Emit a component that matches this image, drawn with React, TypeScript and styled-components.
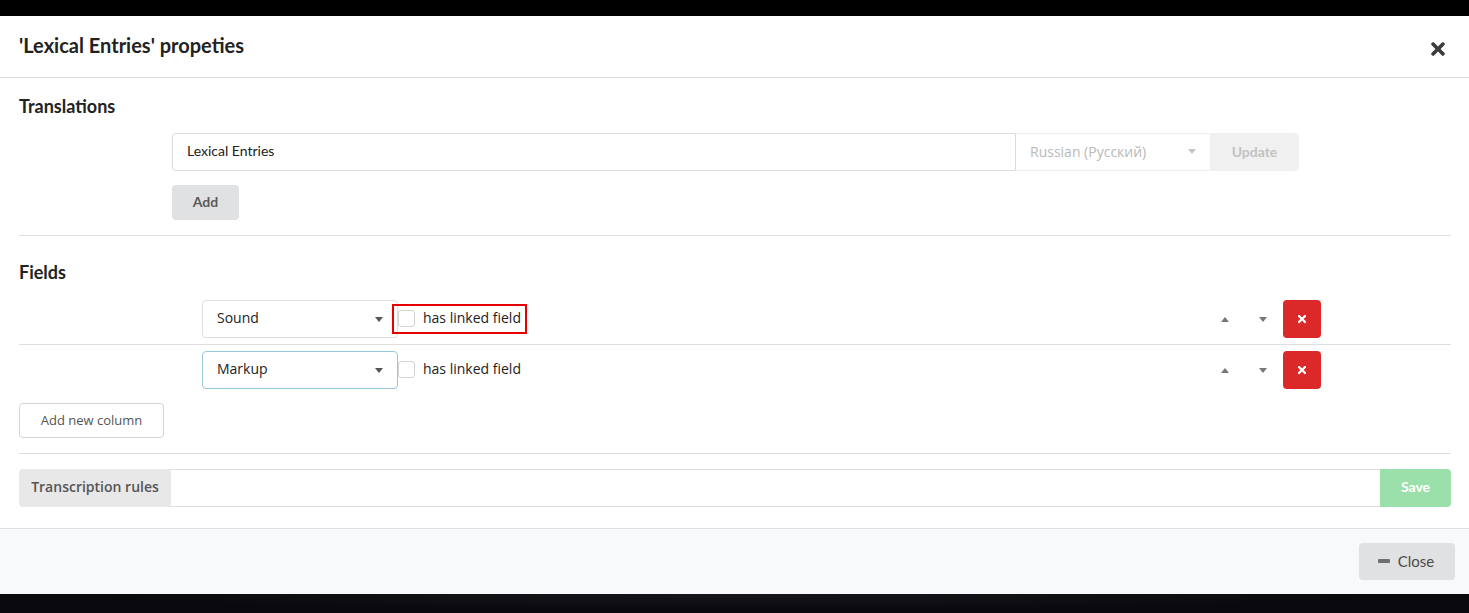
import React from "react";
import styled, { createGlobalStyle } from "styled-components";
import { FaTimes } from "react-icons/fa";

const Global = createGlobalStyle`
  html, body { margin: 0; padding: 0; background: #000; }
  * { box-sizing: border-box; }
  body { font-family: Lato, "Open Sans", sans-serif; }
`;

const Page = styled.div`
  display: flex;
  flex-direction: column;
  width: 1469px;
  height: 613px;
  overflow: hidden;
  background: #000;
`;

const TopStrip = styled.div`
  height: 16px;
  background: #000;
  flex: none;
`;

const BottomStrip = styled.div`
  flex: 1;
  background:
    radial-gradient(ellipse at 50% 0%, #15151b 0%, #0a0a0e 60%),
    #0a0a0e;
`;

const Modal = styled.div`
  background: #fff;
  display: flex;
  flex-direction: column;
  flex: none;
`;

const Header = styled.div`
  height: 62px;
  border-bottom: 1px solid #dedede;
  display: flex;
  align-items: center;
  justify-content: space-between;
  padding: 0 22px 0 19px;
`;

const Title = styled.h1`
  margin: 0;
  font-family: Lato, sans-serif;
  font-weight: 700;
  font-size: 20px;
  color: #222;
  position: relative;
  top: -2px;
`;

const CloseX = styled.span`
  display: flex;
  color: #3c3c3c;
  font-size: 20px;
  margin-top: 4px;
  margin-right: -1px;
`;

const Content = styled.div`
  padding: 17px 18px 21px 19px;
`;

const SectionTitle = styled.h3`
  margin: 0;
  font-family: Lato, sans-serif;
  font-weight: 700;
  font-size: 18px;
  line-height: 23px;
  color: #222;
`;

const Indent = styled.div<{ $left: number }>`
  padding-left: ${(p) => p.$left}px;
`;

const InputRow = styled.div`
  display: flex;
  width: 1127px;
  height: 38px;
  margin-top: 15px;
`;

const TextInput = styled.div`
  flex: 1;
  border: 1px solid #dcdcdc;
  border-radius: 4px 0 0 4px;
  display: flex;
  align-items: center;
  padding: 0 0 3px 14px;
  font-family: Lato, sans-serif;
  font-size: 14px;
  color: #222;
`;

const LangSelect = styled.div`
  width: 194px;
  border-top: 1px solid #eee;
  border-bottom: 1px solid #eee;
  display: flex;
  align-items: center;
  justify-content: space-between;
  padding: 0 14px 2px 14px;
  font-family: "Open Sans", sans-serif;
  font-size: 14px;
  color: #b9b9b9;
`;

const Caret = styled.span<{ $up?: boolean; $color?: string }>`
  width: 0;
  height: 0;
  border-left: 4.5px solid transparent;
  border-right: 4.5px solid transparent;
  ${(p) =>
    p.$up
      ? `border-bottom: 5px solid ${p.$color || "#666"};`
      : `border-top: 5px solid ${p.$color || "#666"};`}
`;

const Button = styled.button<{ $bg: string; $color: string; $w: number; $h: number }>`
  width: ${(p) => p.$w}px;
  height: ${(p) => p.$h}px;
  background: ${(p) => p.$bg};
  color: ${(p) => p.$color};
  border: none;
  border-radius: 4px;
  font-family: Lato, sans-serif;
  font-weight: 700;
  font-size: 14px;
  display: flex;
  align-items: center;
  justify-content: center;
  gap: 8px;
  padding: 0 0 2px;
  cursor: pointer;
  flex: none;
`;

const UpdateButton = styled(Button)`
  border-radius: 0 4px 4px 0;
`;

const AddWrap = styled.div`
  margin-top: 14px;
`;

const Divider = styled.div<{ $top: number }>`
  height: 1px;
  background: #dedede;
  margin-top: ${(p) => p.$top}px;
`;

const FieldsTitle = styled(SectionTitle)`
  margin-top: 25px;
`;

const FieldList = styled.div`
  margin-top: 10px;
`;

const FieldRow = styled.div`
  display: flex;
  align-items: center;
  padding: 6px 0 6px 183px;
  & + & {
    border-top: 1px solid #dedede;
  }
`;

const Select = styled.div<{ $focus?: boolean }>`
  width: 196px;
  height: 38px;
  border: 1px solid ${(p) => (p.$focus ? "#96c8da" : "#dedede")};
  border-radius: 4px;
  display: flex;
  align-items: center;
  justify-content: space-between;
  padding: 0 14px 0 14px;
  font-family: "Open Sans", sans-serif;
  font-size: 14px;
  color: #222;
`;

const SelectText = styled.span`
  margin-bottom: 3px;
`;

const LinkedLabel = styled.label<{ $highlight?: boolean }>`
  position: relative;
  display: flex;
  align-items: center;
  gap: 8px;
  margin-left: 0px;
  line-height: 17px;
  font-family: "Open Sans", sans-serif;
  font-size: 14px;
  color: #222;
  &::after {
    content: "";
    display: ${(p) => (p.$highlight ? "block" : "none")};
    position: absolute;
    left: -6px;
    right: -6px;
    top: -5px;
    bottom: -5px;
    border: 2px solid #e60000;
  }
`;

const LabelText = styled.span`
  margin-bottom: 3px;
`;

const Box = styled.span`
  width: 17px;
  height: 17px;
  border: 1px solid #d4d4d5;
  border-radius: 3px;
  background: #fff;
  margin-bottom: 1px;
`;

const Spacer = styled.div`
  flex: 1;
`;

const ArrowButton = styled.button`
  width: 38px;
  height: 38px;
  background: #fff;
  border: none;
  display: flex;
  align-items: center;
  justify-content: center;
  padding: 0;
`;

const RowActions = styled.div`
  display: flex;
  align-items: center;
  margin-right: 130px;
`;

const DeleteButton = styled(Button)`
  margin-left: 1px;
  padding: 0;
`;

const AddColumnButton = styled.button`
  margin-top: 8px;
  width: 145px;
  height: 35px;
  background: #fff;
  border: 1px solid #d4d4d5;
  border-radius: 4px;
  font-family: "Open Sans", sans-serif;
  font-size: 13px;
  color: #555;
  padding: 0 0 2px;
`;

const RulesRow = styled.div`
  display: flex;
  height: 38px;
  margin-top: 15px;
`;

const RulesLabel = styled.div`
  width: 152px;
  background: #e8e8e8;
  border-radius: 4px 0 0 4px;
  display: flex;
  align-items: center;
  justify-content: center;
  padding-bottom: 3px;
  font-family: "Open Sans", sans-serif;
  font-weight: 600;
  font-size: 14px;
  color: #555;
`;

const RulesInput = styled.div`
  flex: 1;
  border-top: 1px solid #dedede;
  border-bottom: 1px solid #dedede;
`;

const SaveButton = styled(Button)`
  border-radius: 0 4px 4px 0;
  padding-bottom: 3px;
`;

const Footer = styled.div`
  height: 66px;
  border-top: 1px solid #dedede;
  background: #f8f9fa;
  display: flex;
  align-items: center;
  justify-content: flex-end;
  padding: 0 14px 0 0;
`;

const CloseButton = styled(Button)`
  font-weight: 400;
  font-size: 15px;
  color: #4a4a4a;
  gap: 8px;
  padding: 0 2px 0 0;
  margin-top: -1px;
`;

const MinusBar = styled.span`
  width: 12px;
  height: 4px;
  border-radius: 1px;
  background: #707070;
`;

const fields = [
  { name: "Sound", highlight: true, focus: false },
  { name: "Markup", highlight: false, focus: true },
];

export default function App() {
  return (
    <>
      <Global />
      <Page>
        <TopStrip />
        <Modal>
          <Header>
            <Title>'Lexical Entries' propeties</Title>
            <CloseX>
              <FaTimes />
            </CloseX>
          </Header>
          <Content>
            <SectionTitle>Translations</SectionTitle>
            <Indent $left={153}>
              <InputRow>
                <TextInput>Lexical Entries</TextInput>
                <LangSelect>
                  <span>Russian (Русский)</span>
                  <Caret $color="#c4c4c4" />
                </LangSelect>
                <UpdateButton $bg="#f0f0f1" $color="#c2c2c2" $w={89} $h={38}>
                  Update
                </UpdateButton>
              </InputRow>
              <AddWrap>
                <Button $bg="#e0e1e2" $color="#5a5a5a" $w={67} $h={35}>
                  Add
                </Button>
              </AddWrap>
            </Indent>
            <Divider $top={15} />
            <FieldsTitle>Fields</FieldsTitle>
            <FieldList>
              {fields.map((f) => (
                <FieldRow key={f.name}>
                  <Select $focus={f.focus}>
                    <SelectText>{f.name}</SelectText>
                    <Caret $color="#555" />
                  </Select>
                  <LinkedLabel $highlight={f.highlight}>
                    <Box />
                    <LabelText>has linked field</LabelText>
                  </LinkedLabel>
                  <Spacer />
                  <RowActions>
                    <ArrowButton>
                      <Caret $up $color="#777" />
                    </ArrowButton>
                    <ArrowButton>
                      <Caret $color="#777" />
                    </ArrowButton>
                    <DeleteButton $bg="#db2828" $color="#fff" $w={38} $h={38}>
                      <FaTimes size={12} />
                    </DeleteButton>
                  </RowActions>
                </FieldRow>
              ))}
            </FieldList>
            <AddColumnButton>Add new column</AddColumnButton>
            <Divider $top={15} />
            <RulesRow>
              <RulesLabel>Transcription rules</RulesLabel>
              <RulesInput />
              <SaveButton $bg="#9be0ab" $color="#fff" $w={71} $h={38}>
                Save
              </SaveButton>
            </RulesRow>
          </Content>
          <Footer>
            <CloseButton $bg="#e0e1e2" $color="#4a4a4a" $w={96} $h={37}>
              <MinusBar />
              Close
            </CloseButton>
          </Footer>
        </Modal>
        <BottomStrip />
      </Page>
    </>
  );
}
